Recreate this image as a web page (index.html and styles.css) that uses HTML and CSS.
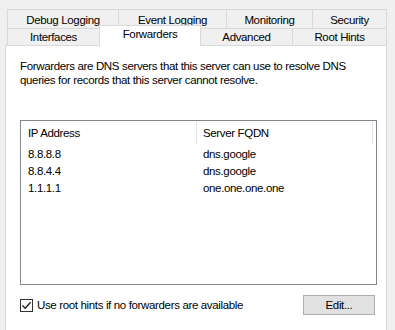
FILE: index.html
```html
<!DOCTYPE html>
<html>
<head>
<meta charset="utf-8">
<link rel="stylesheet" href="styles.css">
</head>
<body>
<div class="tabs">
  <div class="tabrow back">
    <div class="tab w-debug">Debug Logging</div>
    <div class="tab w-event">Event Logging</div>
    <div class="tab w-mon">Monitoring</div>
    <div class="tab w-sec">Security</div>
  </div>
  <div class="tabrow front">
    <div class="tab w-if">Interfaces</div>
    <div class="tab w-fwd selected">Forwarders</div>
    <div class="tab w-adv">Advanced</div>
    <div class="tab w-root">Root Hints</div>
  </div>
</div>
<div class="panel">
  <p class="desc">Forwarders are DNS servers that this server can use to resolve DNS queries for records that this server cannot resolve.</p>
  <div class="listbox">
    <div class="lhead">
      <div class="col c1">IP Address</div>
      <div class="col c2">Server FQDN</div>
    </div>
    <div class="lrow"><div class="cell c1">8.8.8.8</div><div class="cell c2">dns.google</div></div>
    <div class="lrow"><div class="cell c1">8.8.4.4</div><div class="cell c2">dns.google</div></div>
    <div class="lrow"><div class="cell c1">1.1.1.1</div><div class="cell c2">one.one.one.one</div></div>
  </div>
  <div class="bottom">
    <label class="check">
      <span class="box"><svg width="11" height="11" viewBox="0 0 11 11"><path d="M1.5 5.5 L4.2 8.3 L9.6 2.2" fill="none" stroke="#1a1a1a" stroke-width="1.3"/></svg></span>
      <span>Use root hints if no forwarders are available</span>
    </label>
    <button class="btn">Edit...</button>
  </div>
</div>
</body>
</html>
```
FILE: styles.css
```css
html, body {
  margin: 0;
  padding: 0;
  background: #f0f0f0;
  overflow: hidden;
}
body {
  font-family: "Liberation Sans", Arial, sans-serif;
  font-size: 11.5px;
  letter-spacing: -0.35px;
  color: #000;
  width: 395px;
  height: 330px;
}
.tabs {
  padding: 9px 0 0 7px;
}
.tabrow {
  display: flex;
}
.tab {
  box-sizing: border-box;
  border: 1px solid #d9d9d9;
  margin-left: -1px;
  display: flex;
  align-items: center;
  justify-content: center;
  background: #f0f0f0;
  white-space: nowrap;
}
.tab:first-child { margin-left: 0; }
.back .tab { height: 19px; border-bottom: none; padding-top: 1px; }
.front .tab { height: 18px; }
.w-debug { width: 112px; }
.w-event { width: 109px; }
.w-mon { width: 87px; }
.w-sec { width: 75px; }
.w-if { width: 93px; }
.w-fwd { width: 102px; }
.w-adv { width: 93px; }
.w-root { width: 95px; }
.front .tab.selected {
  position: relative;
  z-index: 2;
  background: #fff;
  height: 21px;
  margin-top: -3px;
  border-bottom: none;
  align-items: flex-start;
  padding-top: 2px;
}
.panel {
  box-sizing: border-box;
  margin: -1px 0 0 5px;
  width: 382px;
  height: 300px;
  background: #fff;
  border: 1px solid #d9d9d9;
  padding: 13px 0 0 14px;
  position: relative;
  z-index: 1;
}
.desc {
  margin: 0;
  line-height: 14px;
  width: 350px;
}
.listbox {
  box-sizing: border-box;
  margin-top: 33px;
  width: 357px;
  height: 165px;
  border: 1px solid #828790;
  background: #fff;
}
.lhead {
  display: flex;
  height: 24px;
}
.col {
  box-sizing: border-box;
  display: flex;
  align-items: center;
  border-right: 1px solid #e5e5e5;
  margin: 1px 0;
}
.lhead .c1 { width: 176px; padding-left: 7px; }
.lhead .c2 { width: 176px; padding-left: 6px; }
.lrow {
  display: flex;
  height: 17px;
  align-items: center;
}
.cell.c1 { width: 176px; padding-left: 7px; box-sizing: border-box; }
.cell.c2 { padding-left: 6px; }
.bottom {
  display: flex;
  align-items: center;
  justify-content: space-between;
  width: 355px;
  margin-top: 10px;
}
.check {
  display: flex;
  align-items: center;
  gap: 4px;
}
.box {
  box-sizing: border-box;
  width: 13px;
  height: 13px;
  border: 1px solid #333;
  background: #fff;
  display: flex;
  align-items: center;
  justify-content: center;
}
.btn {
  box-sizing: border-box;
  width: 72px;
  height: 20px;
  border: 1px solid #adadad;
  background: #e1e1e1;
  font-family: inherit;
  font-size: 11.5px;
  letter-spacing: -0.35px;
  color: #000;
  padding: 0;
}
```
